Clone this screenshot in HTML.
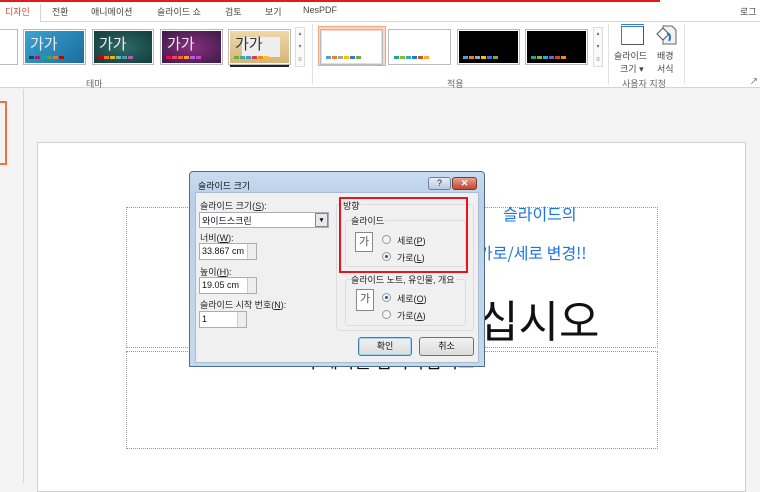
<!DOCTYPE html>
<html><head><meta charset="utf-8"><style>
*{margin:0;padding:0;box-sizing:border-box}
body{width:760px;height:483px;overflow:hidden;background:#f4f4f4;position:relative;font-family:"Liberation Sans","Noto Sans CJK KR",sans-serif;font-size:9px;color:#444}
.a{position:absolute}
.t{position:absolute;white-space:nowrap}
.th{position:absolute;top:29px;height:36px;border:1px solid #bbb;padding:1px}
.th div{width:100%;height:100%;position:relative}
.sw{position:absolute;bottom:4px;left:4px;display:flex;gap:1px}
.sw i{display:block;width:5px;height:3px}
.ga{position:absolute;top:2px;left:5px;font-size:15px;color:#eee;font-family:"Noto Sans CJK KR",sans-serif}
.dl{position:absolute;font-size:9px;color:#222;white-space:nowrap}
.spin{position:absolute;background:#fff;border:1px solid #abadb3;font-size:9px;color:#111;padding:2px 2px}
.spin b{position:absolute;right:0;top:0;width:9px;height:100%;border-left:1px solid #ccc;background:#eee}
.radio{position:absolute;width:9px;height:9px;border-radius:50%;border:1px solid #999;background:#f4f4f4}
.radio.on:after{content:"";position:absolute;left:2px;top:2px;width:3px;height:3px;border-radius:50%;background:#1c5aa6}
.btn{position:absolute;height:19px;border:1px solid #707070;border-radius:3px;background:linear-gradient(#f2f2f2,#dcdcdc);font-size:9px;text-align:center;line-height:17px;color:#111}
.doc{position:absolute;width:18px;height:20px;border:1px solid #888;background:#fff;font-size:11px;line-height:18px;text-align:center;color:#555}
</style></head><body>
<div class="a" style="left:0;top:0;width:760px;height:88px;background:#fff;border-bottom:1px solid #d5d5d5"></div>
<div class="a" style="left:0;top:0;width:660px;height:2px;background:#e21c1c"></div>
<div class="a" style="left:0;top:21px;width:760px;height:1px;background:#d5d5d5"></div>
<div class="a" style="left:0;top:4px;width:41px;height:18px;background:#fff;border-right:1px solid #d5d5d5"></div>
<div class="t" style="left:5px;top:5px;color:#d24726;font-size:9px">디자인</div>
<div class="t" style="left:52px;top:5px">전환</div>
<div class="t" style="left:91px;top:5px">애니메이션</div>
<div class="t" style="left:157px;top:5px">슬라이드 쇼</div>
<div class="t" style="left:225px;top:5px">검토</div>
<div class="t" style="left:265px;top:5px">보기</div>
<div class="t" style="left:303px;top:5px">NesPDF</div>
<div class="t" style="left:740px;top:5px">로그</div>
<div class="th" style="left:-3px;width:21px"><div style="background:#fff"></div></div>
<div class="th" style="left:23px;width:63px"><div style="background:linear-gradient(135deg,#3aa3cf,#1d6d9e)"><span class="ga">가가</span><span class="sw"><i style="background:#1f3864"></i><i style="background:#b4137e"></i><i style="background:#1aa37f"></i><i style="background:#5ea33a"></i><i style="background:#e6792b"></i><i style="background:#c00"></i></span></div></div>
<div class="th" style="left:92px;width:62px"><div style="background:radial-gradient(#2e6a66,#123c3e)"><span class="ga">가가</span><span class="sw"><i style="background:#c00"></i><i style="background:#e6792b"></i><i style="background:#e3b12c"></i><i style="background:#6ba"></i><i style="background:#59a"></i><i style="background:#a6a"></i></span></div></div>
<div class="th" style="left:160px;width:63px"><div style="background:radial-gradient(#8a2f7e,#3b1a4a)"><span class="ga">가가</span><span class="sw"><i style="background:#d14"></i><i style="background:#e46"></i><i style="background:#e63"></i><i style="background:#f93"></i><i style="background:#a6d"></i><i style="background:#c4c"></i></span></div></div>
<div class="th" style="left:228px;width:63px"><div style="background:linear-gradient(#f0d9a8,#d6b37a)"><div class="a" style="left:12px;top:6px;width:38px;height:20px;background:#eee"></div><div class="a" style="left:0;top:14px;width:100%;height:2px;background:#222"></div><span class="ga" style="color:#333">가가</span><span class="sw"><i style="background:#7a3"></i><i style="background:#4a8"></i><i style="background:#49c"></i><i style="background:#c44"></i><i style="background:#e82"></i><i style="background:#fb3"></i></span></div></div>
<div class="a" style="left:295px;top:27px;width:10px;height:40px;border:1px solid #ddd;background:#fafafa;font-size:6px;color:#777;text-align:center;line-height:13px">▴<br>▾<br>≡</div>
<div class="t" style="left:86px;top:77px;color:#666">테마</div>
<div class="a" style="left:312px;top:24px;width:1px;height:60px;background:#e1e1e1"></div>
<div class="a" style="left:318px;top:26px;width:68px;height:40px;background:#fcd5c4;border:1px solid #f3a584"></div>
<div class="th" style="left:320px;width:63px"><div style="background:#fff"><span class="sw"><i style="background:#5b9bd5"></i><i style="background:#ed7d31"></i><i style="background:#a5a5a5"></i><i style="background:#ffc000"></i><i style="background:#4472c4"></i><i style="background:#70ad47"></i></span></div></div>
<div class="th" style="left:388px;width:63px"><div style="background:#fff"><span class="sw"><i style="background:#2a8"></i><i style="background:#8b3"></i><i style="background:#3ac"></i><i style="background:#27b"></i><i style="background:#c52"></i><i style="background:#fa3"></i></span></div></div>
<div class="th" style="left:457px;width:63px"><div style="background:#000"><span class="sw"><i style="background:#5b9bd5"></i><i style="background:#ed7d31"></i><i style="background:#a5a5a5"></i><i style="background:#ffc000"></i><i style="background:#4472c4"></i><i style="background:#70ad47"></i></span></div></div>
<div class="th" style="left:525px;width:63px"><div style="background:#000"><span class="sw"><i style="background:#2a8"></i><i style="background:#8b3"></i><i style="background:#3ac"></i><i style="background:#85c"></i><i style="background:#c42"></i><i style="background:#e82"></i></span></div></div>
<div class="a" style="left:593px;top:27px;width:10px;height:40px;border:1px solid #ddd;background:#fafafa;font-size:6px;color:#777;text-align:center;line-height:13px">▴<br>▾<br>≡</div>
<div class="t" style="left:447px;top:77px;color:#666">적용</div>
<div class="a" style="left:608px;top:24px;width:1px;height:60px;background:#e1e1e1"></div>
<div class="a" style="left:621px;top:26px;width:23px;height:19px;border:1px solid #555;border-top:1px solid #3a7ac0"></div>
<div class="a" style="left:621px;top:24px;width:23px;height:1px;background:#3a7ac0"></div>
<div class="a" style="left:621px;top:26px;width:1px;height:19px;background:#3a7ac0"></div>
<div class="t" style="left:614px;top:50px;line-height:13px;text-align:center">슬라이드<br>&nbsp;크기 ▾</div>
<svg class="a" style="left:655px;top:25px" width="24" height="22"><path d="M8 1h9l4 4v14H8z" fill="#f2f2f2" stroke="#666"/><path d="M2 9l6-6 6 6-6 6z" fill="#fff" stroke="#555"/><path d="M12 8c3 1 4 4 2 8" stroke="#2f6fbe" stroke-width="2" fill="none"/></svg>
<div class="t" style="left:657px;top:50px;line-height:13px">배경<br>서식</div>
<div class="t" style="left:622px;top:77px;color:#666">사용자 지정</div>
<div class="a" style="left:684px;top:24px;width:1px;height:60px;background:#e1e1e1"></div>
<div class="t" style="left:750px;top:76px;font-size:8px">↗</div>
<div class="a" style="left:23px;top:89px;width:1px;height:394px;background:#d8d8d8"></div>
<div class="a" style="left:-3px;top:101px;width:10px;height:64px;border:2px solid #ef7049"></div>
<div class="a" style="left:37px;top:142px;width:709px;height:350px;background:#fff;border:1px solid #d0d0d0"></div>
<div class="a" style="left:126px;top:207px;width:532px;height:141px;border:1px dotted #999"></div>
<div class="a" style="left:126px;top:351px;width:532px;height:98px;border:1px dotted #999"></div>
<div class="t" style="left:478px;top:288px;font-size:44px;color:#111;font-family:'Noto Sans CJK KR',sans-serif;line-height:60px">십시오</div>
<div class="t" style="left:305px;top:349px;font-size:18px;color:#111;font-family:'Noto Sans CJK KR',sans-serif;line-height:24px">부제목을 입력하십시오</div>
<div class="t" style="left:503px;top:201px;font-size:16px;color:#1a73e8;font-family:'Noto Sans CJK KR',sans-serif">슬라이드의</div>
<div class="t" style="left:478px;top:240px;font-size:16px;color:#1a73e8;font-family:'Noto Sans CJK KR',sans-serif">가로/세로 변경!!</div>
<div class="a" style="left:189px;top:171px;width:296px;height:196px;border:1px solid #4f6f92;border-radius:4px 4px 0 0;background:linear-gradient(#c9dbef,#b8d0ea 15%,#c4d9ee)"></div>
<div class="t" style="left:198px;top:179px;font-size:9px;color:#111">슬라이드 크기</div>
<div class="a" style="left:428px;top:177px;width:23px;height:13px;border:1px solid #6a82a2;border-radius:3px;background:linear-gradient(#e8eef6,#b9c9dd);font-size:9px;text-align:center;line-height:11px;color:#223">?</div>
<div class="a" style="left:452px;top:177px;width:25px;height:13px;border:1px solid #7a3a30;border-radius:3px;background:linear-gradient(#e9a093,#c4452d);font-size:9px;text-align:center;line-height:11px;color:#fff;font-weight:bold">✕</div>
<div class="a" style="left:195px;top:192px;width:284px;height:171px;background:#f0f0f0;border:1px solid #a9bcd3"></div>
<div class="dl" style="left:200px;top:199px">슬라이드 크기(<u>S</u>):</div>
<div class="spin" style="left:199px;top:212px;width:130px;height:16px;padding:1px 2px">와이드스크린<b style="width:13px;background:#e8e8e8;text-align:center;font-size:7px;line-height:13px;border:1px solid #888">▾</b></div>
<div class="dl" style="left:200px;top:231px">너비(<u>W</u>):</div>
<div class="spin" style="left:199px;top:243px;width:58px;height:17px">33.867 cm<b></b></div>
<div class="dl" style="left:200px;top:265px">높이(<u>H</u>):</div>
<div class="spin" style="left:199px;top:277px;width:58px;height:17px">19.05 cm<b></b></div>
<div class="dl" style="left:200px;top:298px">슬라이드 시작 번호(<u>N</u>):</div>
<div class="spin" style="left:199px;top:311px;width:48px;height:17px">1<b></b></div>
<div class="a" style="left:336px;top:204px;width:138px;height:127px;border:1px solid #dcdcdc;border-radius:3px"></div>
<div class="dl" style="left:342px;top:199px;background:#f0f0f0;padding:0 1px">방향</div>
<div class="a" style="left:345px;top:220px;width:121px;height:47px;border:1px solid #dcdcdc;border-radius:3px"></div>
<div class="dl" style="left:350px;top:214px;background:#f0f0f0;padding:0 1px">슬라이드</div>
<div class="doc" style="left:355px;top:232px">가</div>
<div class="radio" style="left:382px;top:235px"></div><div class="dl" style="left:397px;top:234px">세로(<u>P</u>)</div>
<div class="radio on" style="left:382px;top:252px"></div><div class="dl" style="left:397px;top:251px">가로(<u>L</u>)</div>
<div class="a" style="left:345px;top:279px;width:121px;height:47px;border:1px solid #dcdcdc;border-radius:3px"></div>
<div class="dl" style="left:350px;top:273px;background:#f0f0f0;padding:0 1px">슬라이드 노트, 유인물, 개요</div>
<div class="doc" style="left:356px;top:289px;height:22px">가</div>
<div class="radio on" style="left:382px;top:293px"></div><div class="dl" style="left:397px;top:292px">세로(<u>O</u>)</div>
<div class="radio" style="left:382px;top:310px"></div><div class="dl" style="left:397px;top:309px">가로(<u>A</u>)</div>
<div class="btn" style="left:358px;top:337px;width:54px;border-color:#3c7fb1;box-shadow:inset 0 0 0 1px #9fd4f3">확인</div>
<div class="btn" style="left:419px;top:337px;width:55px">취소</div>
<div class="a" style="left:339px;top:197px;width:129px;height:76px;border:2px solid #e8141b"></div>
</body></html>
